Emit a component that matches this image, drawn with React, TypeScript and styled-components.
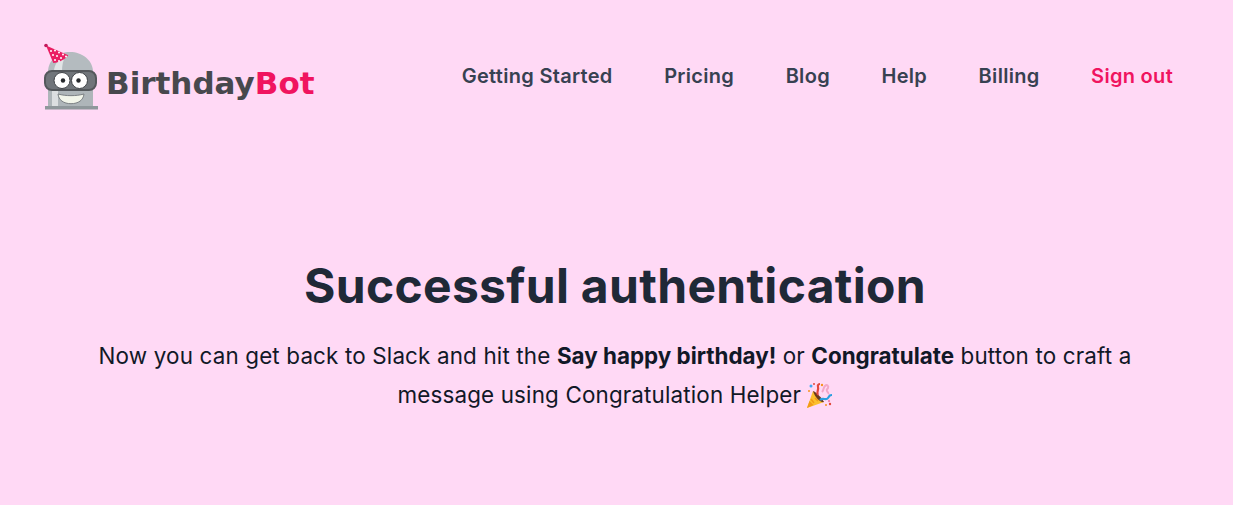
import React from "react";
import styled, { createGlobalStyle } from "styled-components";

const Global = createGlobalStyle`
  html, body { margin: 0; padding: 0; background: #ffd9f5; }
  body { font-family: "Inter", "Liberation Sans", sans-serif; }
`;

const Page = styled.div`
  width: 1233px;
  height: 505px;
  overflow: hidden;
  background: #ffd9f5;
`;

const Header = styled.header`
  display: flex;
  align-items: center;
  justify-content: space-between;
  height: 72px;
  padding: 40px 60px 0 43px;
`;

const Brand = styled.a`
  display: flex;
  align-items: center;
  gap: 7px;
  text-decoration: none;
`;

const Wordmark = styled.span`
  font-family: "DejaVu Sans", sans-serif;
  font-size: 31px;
  font-weight: 700;
  letter-spacing: 0;
  color: #47484d;
  margin-top: 14px;
`;

const WordmarkAccent = styled.span`
  color: #f0145f;
`;

const Nav = styled.nav`
  display: flex;
  align-items: center;
  gap: 51.5px;
`;

const NavLink = styled.a<{ $accent?: boolean }>`
  font-family: "Inter", sans-serif;
  font-size: 20px;
  font-weight: 600;
  letter-spacing: 0.3px;
  color: ${(p) => (p.$accent ? "#f0145f" : "#374151")};
  text-decoration: none;
`;

const Main = styled.main`
  display: flex;
  flex-direction: column;
  align-items: center;
  padding: 144px 93px 0 90px;
`;

const Title = styled.h1`
  margin: 0;
  font-family: "Inter", sans-serif;
  font-size: 48px;
  line-height: 60px;
  font-weight: 700;
  letter-spacing: 0.3px;
  color: #1f2937;
`;

const Body = styled.p`
  margin: 20px 0 0;
  width: 1040px;
  font-size: 22.4px;
  line-height: 39px;
  letter-spacing: 0.16px;
  text-align: center;
  color: #111827;
`;

const Strong = styled.b`
  letter-spacing: 0;
`;

const Party = styled.svg`
  display: inline-block;
  vertical-align: -6px;
  margin-left: -2px;
`;

const Robot = () => (
  <svg width="56" height="68" viewBox="43 42 56 68" aria-hidden="true">
    <rect x="45" y="106" width="53" height="3.500" fill="#8f979b" />
    <rect x="48" y="88" width="45" height="18" fill="#aeb5b9" />
    <rect x="52" y="88" width="6" height="18" fill="#dcdfe1" />
    <path d="M48 72C48 60 58 52 70 52s23 8 23 20z" fill="#b4bbbf" />
    <path d="M54 72c0-8 5-14 12-17-3 5-4 10-4 17z" fill="#e1e4e6" />
    <rect x="45" y="71" width="51" height="19" rx="7" fill="#70757a" stroke="#54585c" strokeWidth="2" />
    <circle cx="62" cy="80.500" r="8" fill="#fff" stroke="#3f4347" strokeWidth="1" />
    <circle cx="79.500" cy="80.500" r="8" fill="#fff" stroke="#3f4347" strokeWidth="1" />
    <circle cx="63" cy="80.500" r="2.200" fill="#26292c" />
    <circle cx="78.500" cy="80.500" r="2.200" fill="#26292c" />
    <path d="M58 94c8 2.200 18 2.200 26 0-.6 6-5.600 9.700-13 9.700S58.600 100 58 94z" fill="#f2f5ea" stroke="#7b8084" strokeWidth="1" />
    <path d="M46 45.500L68.300 55.300C65 59.500 59 62.500 53.300 63z" fill="#ea1e63" />
    <circle cx="46" cy="45.500" r="1.800" fill="#c2185b" />
    <g fill="#fff">
      <circle cx="51" cy="51" r="1" /><circle cx="55" cy="50.500" r="1" /><circle cx="59" cy="52.500" r="1" />
      <circle cx="63" cy="54.500" r="1" /><circle cx="66" cy="56.500" r="1" /><circle cx="53" cy="55" r="1" />
      <circle cx="57" cy="56" r="1" /><circle cx="61" cy="58" r="1" /><circle cx="55" cy="60" r="1" />
      <circle cx="59" cy="61" r="1" />
    </g>
  </svg>
);

const PartyPopper = () => (
  <Party width="27" height="27" viewBox="0 0 27 27" aria-hidden="true">
    <path d="M1 26L7 9l11 11z" fill="#fbc02d" />
    <path d="M1 26l2.500-7 4 4z" fill="#f29a17" />
    <path d="M9 16l3 3M5 17l3 4" stroke="#f29a17" strokeWidth="1.500" />
    <path d="M7 9c3 1 9 7 11 11-3 1-9-4-11-11z" fill="#6b3a1e" />
    <path d="M12 13c-2-3 1-5 0-8s2-3 2-3" fill="none" stroke="#e2483d" strokeWidth="2.200" />
    <path d="M14 18c3-3 6 1 8-2s2-3 4-3" fill="none" stroke="#2b9fe0" strokeWidth="2.200" />
    <path d="M16 10c2-2 1-4 3-6s4 0 3 2-2 1-1 3 2 2 1 3" fill="none" stroke="#f2a7c8" strokeWidth="2" />
    <circle cx="5" cy="4" r="1.500" fill="#3fa9f5" />
    <circle cx="16" cy="3" r="1.200" fill="#f7931e" />
    <circle cx="8" cy="2" r="1" fill="#e2483d" />
    <circle cx="23" cy="19" r="1.200" fill="#f28ab2" />
    <circle cx="24" cy="22" r="1.200" fill="#e2483d" />
    <circle cx="20" cy="23" r="1" fill="#f7931e" />
    <circle cx="3" cy="9" r="1" fill="#f7931e" />
  </Party>
);

export default function App() {
  return (
    <Page>
      <Global />
      <Header>
        <Brand href="#">
          <Robot />
          <Wordmark>
            Birthday<WordmarkAccent>Bot</WordmarkAccent>
          </Wordmark>
        </Brand>
        <Nav>
          <NavLink href="#">Getting Started</NavLink>
          <NavLink href="#">Pricing</NavLink>
          <NavLink href="#">Blog</NavLink>
          <NavLink href="#">Help</NavLink>
          <NavLink href="#">Billing</NavLink>
          <NavLink href="#" $accent>Sign out</NavLink>
        </Nav>
      </Header>
      <Main>
        <Title>Successful authentication</Title>
        <Body>
          Now you can get back to Slack and hit the <Strong>Say happy birthday!</Strong> or{" "}
          <Strong>Congratulate</Strong> button to craft a message using Congratulation Helper <PartyPopper />
        </Body>
      </Main>
    </Page>
  );
}
